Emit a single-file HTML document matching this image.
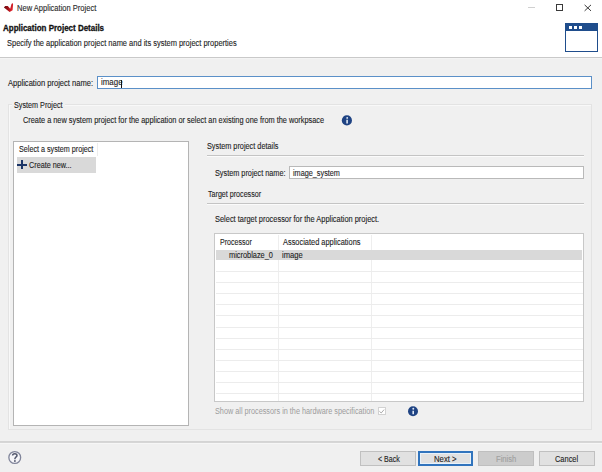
<!DOCTYPE html>
<html><head><meta charset="utf-8">
<style>
*{box-sizing:border-box;margin:0;padding:0}
html,body{width:602px;height:472px;overflow:hidden;background:#f0f0f0;font-family:"Liberation Sans",sans-serif;}
.a{position:absolute}
.t{position:absolute;font-size:8.5px;line-height:10px;white-space:nowrap;color:#1e1e1e;transform-origin:0 0;-webkit-text-stroke:0.12px currentColor}
.b{position:absolute}
</style></head><body>
<!-- header white -->
<div class="a" style="left:0;top:0;width:602px;height:57px;background:#fff"></div>
<div class="a" style="left:0;top:57px;width:602px;height:1px;background:#c9c9c9"></div><div class="a" style="left:0;top:58px;width:602px;height:1px;background:#f4f4f4"></div>

<!-- title icon -->
<svg class="a" style="left:0;top:0" width="16" height="16" viewBox="0 0 16 16">
<defs><linearGradient id="rg" x1="0" y1="0" x2="1" y2="0.3"><stop offset="0" stop-color="#5e0a0e"/><stop offset="0.55" stop-color="#9c1016"/><stop offset="1" stop-color="#e0242c"/></linearGradient></defs>
<path d="M3.9 7.4L5.2 5.9L7.8 6.1L10.2 8.8L11.5 4.1L12.6 3.0L13.1 4.4L12.6 10.2L9.6 12.0Z" fill="url(#rg)"/>
</svg>
<div class="t" style="left:16.5px;top:2.7px;transform:scaleX(0.888);color:#2a2a2a">New Application Project</div>

<!-- window controls -->
<div class="a" style="left:528px;top:7px;width:7px;height:1px;background:#d0d0d0"></div>
<div class="a" style="left:556px;top:4px;width:7px;height:7px;border:1px solid #3a3a3a"></div>
<svg class="a" style="left:584px;top:4px" width="8" height="8" viewBox="0 0 8 8"><path d="M0.6 0.9L7 6.9M7 0.9L0.6 6.9" stroke="#3a3a3a" stroke-width="1"/></svg>

<div class="t" style="left:2.5px;top:23px;font-size:9px;font-weight:bold;transform:scaleX(.886);color:#111;-webkit-text-stroke:0.3px #111">Application Project Details</div>
<div class="t" style="left:7px;top:37.5px;transform:scaleX(0.879)">Specify the application project name and its system project properties</div>

<!-- dialog icon -->
<div class="a" style="left:565px;top:23px;width:33px;height:29px;border:1px solid #1f4d8c;background:#fff"></div>
<div class="a" style="left:565px;top:23px;width:33px;height:8px;background:#1f4d8c"></div>
<div class="a" style="left:569px;top:25.5px;width:3px;height:3px;background:#fff"></div>
<div class="a" style="left:574.2px;top:25.5px;width:3px;height:3px;background:#fff"></div>
<div class="a" style="left:579.2px;top:25.5px;width:3px;height:3px;background:#fff"></div>

<!-- app project name -->
<div class="t" style="left:8.4px;top:77.5px;transform:scaleX(0.892)">Application project name:</div>
<div class="a" style="left:97px;top:76px;width:495px;height:13px;border:1px solid #5b90c8;background:#fff"></div>
<div class="t" style="left:100.8px;top:77px;transform:scaleX(0.93)">image</div>
<div class="a" style="left:121px;top:80px;width:1px;height:8px;background:#111"></div>

<!-- group box -->
<div class="a" style="left:8px;top:104px;width:584px;height:326px;border:1px solid #e3e3e3;box-shadow:inset 1px 1px 0 #f8f8f8"></div>
<div class="a" style="left:12px;top:100px;width:52.5px;height:9px;background:#f0f0f0"></div>
<div class="t" style="left:14px;top:100px;transform:scaleX(0.85)">System Project</div>
<div class="t" style="left:23px;top:115px;transform:scaleX(0.866)">Create a new system project for the application or select an existing one from the workpsace</div>
<svg class="a" style="left:341px;top:115px" width="12" height="12" viewBox="0 0 12 12"><circle cx="5.9" cy="5.4" r="5.1" fill="#1f4383"/><circle cx="6.2" cy="2.9" r="0.95" fill="#dfe8f5"/><path d="M5.3 4.8H6.9V8.4H5.3Z" fill="#dfe8f5"/></svg>

<!-- list box -->
<div class="a" style="left:13px;top:141px;width:176px;height:285px;border:1px solid #b4b4b4;background:#fff"></div>
<div class="a" style="left:97px;top:143px;width:1px;height:13px;background:#ededed"></div>
<div class="t" style="left:18.5px;top:144px;transform:scaleX(0.846)">Select a system project</div>
<div class="a" style="left:16.7px;top:157.2px;width:79.7px;height:15.4px;background:#d9d9d9"></div>
<div class="a" style="left:17.3px;top:163.5px;width:9.7px;height:2.5px;background:#1b3566"></div>
<div class="a" style="left:20.7px;top:160.3px;width:2.8px;height:9.2px;background:#1b3566"></div>
<div class="t" style="left:28.9px;top:160px;transform:scaleX(0.851)">Create new...</div>

<!-- right panel -->
<div class="t" style="left:207px;top:140.5px;transform:scaleX(0.859)">System project details</div>
<div class="a" style="left:207px;top:155px;width:377px;height:1px;background:#c4c4c4"></div><div class="a" style="left:207px;top:156px;width:377px;height:1px;background:#fbfbfb"></div>
<div class="t" style="left:214.5px;top:168px;transform:scaleX(0.858)">System project name:</div>
<div class="a" style="left:289px;top:166.3px;width:295px;height:12.7px;border:1px solid #b9b9b9;background:#fff"></div>
<div class="t" style="left:293.3px;top:168px;transform:scaleX(0.856)">image_system</div>

<div class="t" style="left:207.5px;top:189px;transform:scaleX(0.838)">Target processor</div>
<div class="a" style="left:207px;top:203px;width:377px;height:1px;background:#c4c4c4"></div><div class="a" style="left:207px;top:204px;width:377px;height:1px;background:#fbfbfb"></div>
<div class="t" style="left:214.5px;top:214px;transform:scaleX(0.875)">Select target processor for the Application project.</div>

<!-- table -->
<div class="a" style="left:214px;top:233px;width:370px;height:169px;border:1px solid #c8c8c8;background:#fff"></div>
<div class="a" style="left:278px;top:234.5px;width:1px;height:166px;background:#eeeeee"></div>
<div class="a" style="left:370.5px;top:234.5px;width:1px;height:166px;background:#eeeeee"></div>
<div class="a" style="left:215.5px;top:249.8px;width:366.5px;height:10.5px;background:#d9d9d9"></div>
<div class="a" style="left:215.5px;top:271px;width:367px;height:1px;background:#ececec"></div>
<div class="a" style="left:215.5px;top:282px;width:367px;height:1px;background:#ececec"></div>
<div class="a" style="left:215.5px;top:293px;width:367px;height:1px;background:#ececec"></div>
<div class="a" style="left:215.5px;top:304px;width:367px;height:1px;background:#ececec"></div>
<div class="a" style="left:215.5px;top:315px;width:367px;height:1px;background:#ececec"></div>
<div class="a" style="left:215.5px;top:327px;width:367px;height:1px;background:#ececec"></div>
<div class="a" style="left:215.5px;top:338px;width:367px;height:1px;background:#ececec"></div>
<div class="a" style="left:215.5px;top:349px;width:367px;height:1px;background:#ececec"></div>
<div class="a" style="left:215.5px;top:360px;width:367px;height:1px;background:#ececec"></div>
<div class="a" style="left:215.5px;top:371px;width:367px;height:1px;background:#ececec"></div>
<div class="a" style="left:215.5px;top:382px;width:367px;height:1px;background:#ececec"></div>
<div class="a" style="left:215.5px;top:393px;width:367px;height:1px;background:#ececec"></div>
<div class="t" style="left:219.5px;top:237px;transform:scaleX(0.831)">Processor</div>
<div class="t" style="left:282.5px;top:237px;transform:scaleX(0.872)">Associated applications</div>
<div class="t" style="left:228.9px;top:249.5px;transform:scaleX(0.869)">microblaze_0</div>
<div class="t" style="left:282px;top:249.5px;transform:scaleX(0.894)">image</div>

<div class="t" style="left:214.5px;top:406px;transform:scaleX(0.856);color:#9c9c9c;-webkit-text-stroke:0">Show all processors in the hardware specification</div>
<div class="a" style="left:378px;top:407px;width:8px;height:8px;border:1px solid #d2d2d2;background:#fff"></div>
<svg class="a" style="left:378px;top:407.5px" width="9" height="9" viewBox="0 0 9 9"><path d="M1.4 3.3L3.2 5L6.1 1.6" stroke="#ababab" stroke-width="1" fill="none"/></svg>
<svg class="a" style="left:407px;top:406px" width="12" height="12" viewBox="0 0 12 12"><circle cx="6" cy="5.3" r="5" fill="#1f4383"/><circle cx="6.3" cy="2.8" r="0.95" fill="#dfe8f5"/><path d="M5.4 4.7H7V8.3H5.4Z" fill="#dfe8f5"/></svg>

<!-- bottom separator -->
<div class="a" style="left:0;top:441px;width:602px;height:1px;background:#d4d4d4"></div><div class="a" style="left:0;top:442px;width:602px;height:1px;background:#d6d6d6"></div><div class="a" style="left:0;top:443px;width:602px;height:1px;background:#f6f6f6"></div>

<!-- help icon -->
<svg class="a" style="left:7px;top:450px" width="16" height="16" viewBox="0 0 16 16"><circle cx="7.75" cy="7.5" r="5.9" fill="#f5f5f8" stroke="#80859a" stroke-width="1.3"/><path d="M5.6 5.6C5.6 4.3 6.6 3.7 7.8 3.7C9.1 3.7 10 4.5 10 5.5C10 6.6 9.1 7 8.5 7.5C8 7.9 7.9 8.3 7.9 9.2" fill="none" stroke="#52576c" stroke-width="1.5"/><circle cx="7.9" cy="11" r="0.9" fill="#52576c"/></svg>

<!-- buttons -->
<div class="a" style="left:360.4px;top:451.3px;width:55.6px;height:14.4px;border:1px solid #c0c0c0;background:#e1e1e1"></div>
<div class="t" style="left:378px;top:453.5px;transform:scaleX(0.83)">&lt; Back</div>
<div class="a" style="left:417.7px;top:451.3px;width:55.3px;height:14.4px;border:2px solid #3174bd;background:#e1e1e1;box-shadow:inset 0 0 0 1px #e8f2fa"></div>
<div class="t" style="left:434px;top:453.5px;transform:scaleX(0.91)">Next &gt;</div>
<div class="a" style="left:478.4px;top:451.3px;width:55.4px;height:14.4px;border:1px solid #bfbfbf;background:#cccccc"></div>
<div class="t" style="left:495.5px;top:453.5px;transform:scaleX(0.894);color:#a0a0a0">Finish</div>
<div class="a" style="left:539.2px;top:451.3px;width:55.8px;height:14.4px;border:1px solid #c0c0c0;background:#e1e1e1"></div>
<div class="t" style="left:555.2px;top:453.5px;transform:scaleX(0.875)">Cancel</div>
</body></html>
